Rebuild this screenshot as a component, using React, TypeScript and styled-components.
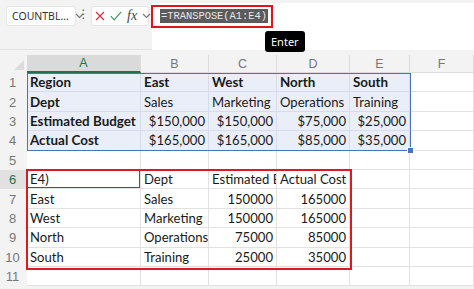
import React from 'react';
import styled, {createGlobalStyle} from 'styled-components';

const Global = createGlobalStyle`
  html, body { margin: 0; padding: 0; background: #f3f3f3; }
  body { font-family: "Lato", "Liberation Sans", sans-serif; }
`;

const Page = styled.div`
  width: 474px;
  height: 289px;
  overflow: hidden;
  position: relative;
  background: #f3f3f3;
`;

const Toolbar = styled.div`
  height: 50px;
  display: flex;
  align-items: flex-start;
  padding-left: 6px;
  box-sizing: border-box;
  border-bottom: 1px solid #e2e2e2;
`;

const Box = styled.div<{w: number; gap: number}>`
  margin-top: 6px;
  width: ${p => p.w}px;
  height: 20px;
  box-sizing: border-box;
  background: #fff;
  border: 1px solid #e6e6e6;
  border-radius: 3px;
  display: flex;
  align-items: center;
  padding: 0 2px 0 3px;
  gap: ${p => p.gap}px;
  font-family: "Noto Sans", sans-serif;
  font-size: 10.5px;
  color: #333;
  & > svg { flex-shrink: 0; }
`;

const NameText = styled.span`
  flex: 1;
  padding-left: 2px;
  white-space: nowrap;
`;

const Dots = styled.span`
  width: 15px;
  margin-top: 7px;
  text-align: center;
  font-size: 12px;
  color: #555;
  font-family: "DejaVu Sans", sans-serif;
`;

const Fx = styled.span`
  font-family: "Liberation Serif", serif;
  font-style: italic;
  font-size: 14px;
  color: #444;
`;

const FormulaBar = styled.div`
  margin-left: 3px;
  margin-top: 3px;
  flex: 1;
  height: 47px;
  background: #fff;
  position: relative;
`;

const FormulaText = styled.div`
  display: inline-flex;
  align-items: center;
  height: 23px;
  padding: 0 3px 0 7px;
  border: 2px solid #e0141e;
  box-sizing: border-box;
  margin-left: -1px;
`;

const Highlight = styled.span`
  background: #5b5b5b;
  color: #e8e8e8;
  font-family: "Liberation Mono", monospace;
  font-size: 10.4px;
  line-height: 14px;
  padding: 0 1px;
`;

const Tip = styled.div`
  position: absolute;
  left: 113px;
  top: 28px;
  background: #000;
  color: #fff;
  font-family: "Noto Sans", sans-serif;
  font-size: 11px;
  line-height: 21px;
  padding: 0 6px;
  border-radius: 3px;
`;

const GridWrap = styled.div`
  margin-top: 5px;
  position: relative;
`;

const Grid = styled.div`
  display: grid;
  grid-template-columns: 27px 114px 68px 68px 73px 60px 1fr;
  grid-template-rows: 18px repeat(11, 19.4px);
  background: #fff;
`;

const ColHead = styled.div<{active?: boolean}>`
  background: ${p => (p.active ? '#dadada' : '#f3f3f3')};
  color: ${p => (p.active ? '#217346' : '#777')};
  border-right: 1px solid #dcdcdc;
  border-bottom: ${p => (p.active ? '2px solid #217346' : '1px solid #dcdcdc')};
  font-family: "Liberation Sans", sans-serif;
  font-size: 12.5px;
  display: flex;
  align-items: center;
  justify-content: center;
  box-sizing: border-box;
`;

const Corner = styled.div`
  background: #f3f3f3;
  position: relative;
  &::after {
    content: '';
    position: absolute;
    right: 3px;
    bottom: 3px;
    border-left: 10px solid transparent;
    border-bottom: 10px solid #dcdcdc;
  }
`;

const RowHead = styled.div<{active?: boolean}>`
  background: ${p => (p.active ? '#e1e1e1' : '#f3f3f3')};
  color: ${p => (p.active ? '#217346' : '#777')};
  font-family: "Liberation Sans", sans-serif;
  font-size: 13px;
  display: flex;
  align-items: center;
  justify-content: center;
  padding-right: 2px;
  box-sizing: border-box;
`;

const Cell = styled.div<{bold?: boolean; right?: boolean; sel?: boolean; active?: boolean}>`
  background: ${p => (p.sel ? '#e9eef8' : '#fff')};
  border-right: 1px solid ${p => (p.sel ? '#d6dced' : '#e1e1e1')};
  border-bottom: 1px solid ${p => (p.sel ? '#d6dced' : '#e1e1e1')};
  ${p => (p.active ? 'box-shadow: inset -1px -1px 0 #217346;' : '')}
  box-sizing: border-box;
  font-size: ${p => (p.bold ? 13.4 : 13.1)}px;
  font-weight: ${p => (p.bold ? 700 : 400)};
  color: #1a1a1a;
  display: flex;
  align-items: center;
  justify-content: ${p => (p.right ? 'flex-end' : 'flex-start')};
  padding: 0 3px;
  white-space: nowrap;
  overflow: hidden;
`;

const Selection = styled.div`
  position: absolute;
  left: 27px;
  top: 18px;
  width: 384px;
  height: 78px;
  border: 1.5px solid #4a72c0;
  box-sizing: border-box;
  pointer-events: none;
  &::after {
    content: '';
    position: absolute;
    right: -4px;
    bottom: -4px;
    width: 5px;
    height: 5px;
    background: #4a72c0;
    border: 1px solid #fff;
  }
`;

const RedBox = styled.div`
  position: absolute;
  left: 26px;
  top: 114px;
  width: 326px;
  height: 101px;
  border: 2px solid #dc1a22;
  box-sizing: border-box;
  pointer-events: none;
`;

type C = {t?: string; b?: boolean; r?: boolean};

const rows: C[][] = [
  [{t: 'Region', b: true}, {t: 'East', b: true}, {t: 'West', b: true}, {t: 'North', b: true}, {t: 'South', b: true}, {}],
  [{t: 'Dept', b: true}, {t: 'Sales'}, {t: 'Marketing'}, {t: 'Operations'}, {t: 'Training'}, {}],
  [{t: 'Estimated Budget', b: true}, {t: '$150,000', r: true}, {t: '$150,000', r: true}, {t: '$75,000', r: true}, {t: '$25,000', r: true}, {}],
  [{t: 'Actual Cost', b: true}, {t: '$165,000', r: true}, {t: '$165,000', r: true}, {t: '$85,000', r: true}, {t: '$35,000', r: true}, {}],
  [{}, {}, {}, {}, {}, {}],
  [{t: 'E4)'}, {t: 'Dept'}, {t: 'Estimated Budget'}, {t: 'Actual Cost'}, {}, {}],
  [{t: 'East'}, {t: 'Sales'}, {t: '150000', r: true}, {t: '165000', r: true}, {}, {}],
  [{t: 'West'}, {t: 'Marketing'}, {t: '150000', r: true}, {t: '165000', r: true}, {}, {}],
  [{t: 'North'}, {t: 'Operations'}, {t: '75000', r: true}, {t: '85000', r: true}, {}, {}],
  [{t: 'South'}, {t: 'Training'}, {t: '25000', r: true}, {t: '35000', r: true}, {}, {}],
  [{}, {}, {}, {}, {}, {}],
];

const cols = ['A', 'B', 'C', 'D', 'E', 'F'];

function X() {
  return (
    <svg width="10" height="10" viewBox="0 0 10 10">
      <path d="M1 1 L9 9 M9 1 L1 9" stroke="#d9303a" strokeWidth="1.2" fill="none" />
    </svg>
  );
}

function Check() {
  return (
    <svg width="12" height="10" viewBox="0 0 12 10">
      <path d="M0.8 5.2 L4.2 8.8 L11.2 0.8" stroke="#3b9a5a" strokeWidth="1.2" fill="none" />
    </svg>
  );
}

function Chevron() {
  return (
    <svg width="9" height="6" viewBox="0 0 9 6">
      <path d="M1 1 L4.5 4.5 L8 1" stroke="#777" strokeWidth="1.1" fill="none" />
    </svg>
  );
}

export default function App() {
  return (
    <Page>
      <Global />
      <Toolbar>
        <Box w={70} gap={6}>
          <NameText>COUNTBL...</NameText>
          <Chevron />
        </Box>
        <Dots>⋮</Dots>
        <Box w={58} gap={5}>
          <X />
          <Check />
          <Fx>fx</Fx>
          <Chevron />
        </Box>
        <FormulaBar>
          <FormulaText>
            <Highlight>=TRANSPOSE(A1:E4)</Highlight>
          </FormulaText>
          <Tip>Enter</Tip>
        </FormulaBar>
      </Toolbar>
      <GridWrap>
        <Grid>
          <Corner />
          {cols.map(c => (
            <ColHead key={c} active={c === 'A'}>{c}</ColHead>
          ))}
          {rows.map((r, i) => (
            <React.Fragment key={i}>
              <RowHead active={i === 5}>{i + 1}</RowHead>
              {r.map((c, j) => (
                <Cell key={j} bold={c.b} right={c.r} sel={i < 4 && j < 5} active={i === 5 && j === 0}>
                  {c.t}
                </Cell>
              ))}
            </React.Fragment>
          ))}
        </Grid>
        <Selection />
        <RedBox />
      </GridWrap>
    </Page>
  );
}
